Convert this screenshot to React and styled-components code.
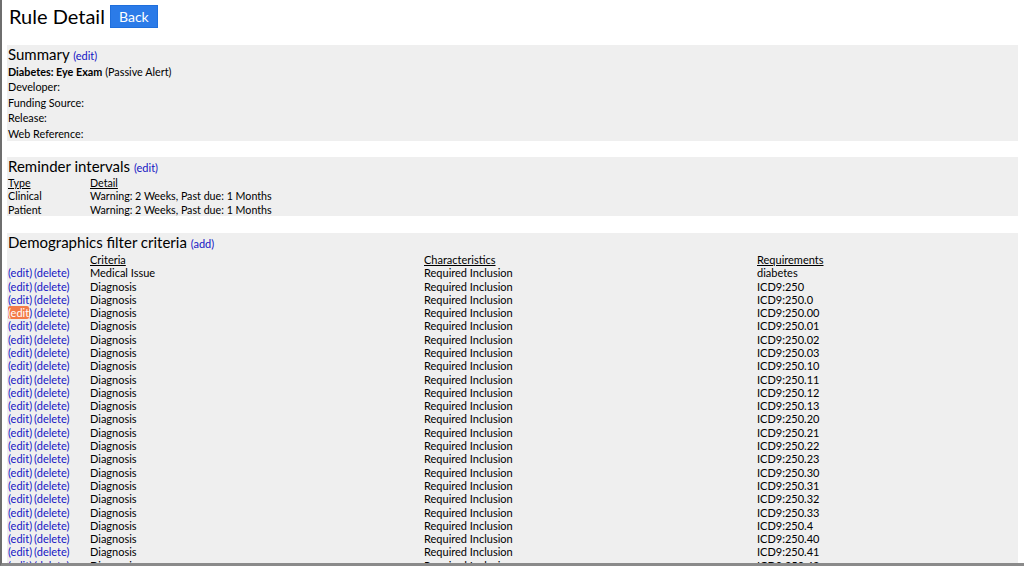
import React from "react";
import styled, { createGlobalStyle } from "styled-components";

const Global = createGlobalStyle`
  html, body { margin: 0; padding: 0; background: #fff; }
  body { font-family: Lato, "Open Sans", sans-serif; color: #000; }
`;

const Frame = styled.div`
  box-sizing: border-box;
  height: 566px;
  overflow: hidden;
  border-left: 2px solid #6e6e6e;
  border-bottom: 3px solid #8a8a8a;
  padding: 0 6px 0 5px;
`;

const Header = styled.div`
  display: flex;
  align-items: center;
  gap: 5px;
  padding: 5px 0 0 2px;
  height: 23px;
  margin-bottom: 17px;
`;

const Title = styled.h1`
  margin: 0;
  font-size: 20px;
  font-weight: 400;
  line-height: 23px;
`;

const Button = styled.button`
  height: 23px;
  width: 48px;
  padding: 0;
  border: 1px solid #1f6fdc;
  background: #2b7be8;
  color: #fff;
  font-family: Lato, sans-serif;
  font-size: 14px;
  line-height: 21px;
  cursor: pointer;
`;

const Panel = styled.section`
  background: #efefef;
  padding: 0 0 0 1px;
  margin-bottom: ${(p) => p.$gap || 16}px;
`;

const Heading = styled.h2`
  margin: 0;
  font-size: 15px;
  font-weight: 400;
  line-height: 19px;
  height: ${(p) => p.$h || 19}px;
`;

const Link = styled.a`
  color: #1515c4;
  font-size: 11px;
  text-decoration: none;
  cursor: pointer;
`;

const Line = styled.div`
  font-size: 10.8px;
  line-height: 15.4px;
`;

const Table = styled.div`
  display: grid;
  grid-template-columns: ${(p) => p.$cols};
  font-size: ${(p) => p.$size || 11}px;
  line-height: 13.3px;
`;

const Th = styled.div`
  text-decoration: underline;
  white-space: nowrap;
`;

const Td = styled.div`
  white-space: nowrap;
`;

const Actions = styled.div`
  white-space: nowrap;
  display: flex;
  gap: 2px;
`;

const Mark = styled.span`
  background: #f37a47;
  color: #fff;
  border-radius: 2px;
`;

const reqs = [
  "diabetes",
  "ICD9:250",
  "ICD9:250.0",
  "ICD9:250.00",
  "ICD9:250.01",
  "ICD9:250.02",
  "ICD9:250.03",
  "ICD9:250.10",
  "ICD9:250.11",
  "ICD9:250.12",
  "ICD9:250.13",
  "ICD9:250.20",
  "ICD9:250.21",
  "ICD9:250.22",
  "ICD9:250.23",
  "ICD9:250.30",
  "ICD9:250.31",
  "ICD9:250.32",
  "ICD9:250.33",
  "ICD9:250.4",
  "ICD9:250.40",
  "ICD9:250.41",
  "ICD9:250.42",
  "ICD9:250.43",
  "ICD9:250.5",
];

const demoCols = "82px 334px 333px 1fr";

export default function App() {
  return (
    <>
      <Global />
      <Frame>
        <Header>
          <Title>Rule Detail</Title>
          <Button>Back</Button>
        </Header>

        <Panel>
          <Heading>
            Summary <Link>(edit)</Link>
          </Heading>
          <Line>
            <b>Diabetes: Eye Exam</b> (Passive Alert)
          </Line>
          <Line>Developer:</Line>
          <Line>Funding Source:</Line>
          <Line>Release:</Line>
          <Line>Web Reference:</Line>
        </Panel>

        <Panel $gap={17}>
          <Heading>
            Reminder intervals <Link>(edit)</Link>
          </Heading>
          <Table $cols="82px 1fr" $size={10.7}>
            <Th>Type</Th>
            <Th>Detail</Th>
            <Td>Clinical</Td>
            <Td>Warning: 2 Weeks, Past due: 1 Months</Td>
            <Td>Patient</Td>
            <Td>Warning: 2 Weeks, Past due: 1 Months</Td>
          </Table>
        </Panel>

        <Panel>
          <Heading $h={20}>
            Demographics filter criteria <Link>(add)</Link>
          </Heading>
          <Table $cols={demoCols}>
            <Td />
            <Th>Criteria</Th>
            <Th>Characteristics</Th>
            <Th>Requirements</Th>
            {reqs.map((r, i) => (
              <React.Fragment key={r}>
                <Actions>
                  {i === 3 ? (
                    <Link>
                      <Mark>(edit</Mark>)
                    </Link>
                  ) : (
                    <Link>(edit)</Link>
                  )}
                  <Link>(delete)</Link>
                </Actions>
                <Td>{i === 0 ? "Medical Issue" : "Diagnosis"}</Td>
                <Td>Required Inclusion</Td>
                <Td>{r}</Td>
              </React.Fragment>
            ))}
          </Table>
        </Panel>
      </Frame>
    </>
  );
}
